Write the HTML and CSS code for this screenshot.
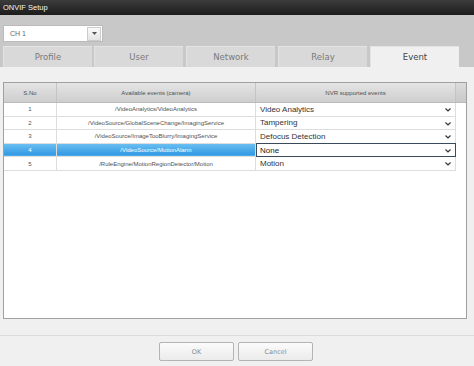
FILE: index.html
```html
<!DOCTYPE html>
<html lang="en">
<head>
<meta charset="UTF-8" />
<title>ONVIF Setup</title>
<link rel="stylesheet" href="styles.css">
</head>
<body>

  <div class="titlebar">ONVIF Setup</div>

  <div class="top">
    <div class="channel">
      <span>CH 1</span>
      <span class="channel-btn">
        <svg width="5" height="3" viewBox="0 0 5 3"><path d="M0 0 L5 0 L2.5 3 Z" fill="#555"/></svg>
      </span>
    </div>
    <div class="tabs">
      <div class="tab">Profile</div>
      <div class="tab">User</div>
      <div class="tab">Network</div>
      <div class="tab">Relay</div>
      <div class="tab active">Event</div>
    </div>
  </div>

  <div class="content">
    <div class="grid-wrap">
      <table class="grid">
        <tr>
          <th class="c-no">S.No</th>
          <th class="c-cam">Available events (camera)</th>
          <th class="c-nvr">NVR supported events</th>
          <th class="c-pad"></th>
        </tr>
        <tr>
          <td>1</td>
          <td>/VideoAnalytics/VideoAnalytics</td>
          <td class="sel"><span>Video Analytics</span><svg class="chev" width="6" height="4" viewBox="0 0 6 4"><path d="M0.5 0.5 L3 3 L5.5 0.5" fill="none" stroke="#333" stroke-width="1.2"/></svg></td>
          <td class="pad"></td>
        </tr>
        <tr>
          <td>2</td>
          <td>/VideoSource/GlobalSceneChange/ImagingService</td>
          <td class="sel"><span>Tampering</span><svg class="chev" width="6" height="4" viewBox="0 0 6 4"><path d="M0.5 0.5 L3 3 L5.5 0.5" fill="none" stroke="#333" stroke-width="1.2"/></svg></td>
          <td class="pad"></td>
        </tr>
        <tr>
          <td>3</td>
          <td>/VideoSource/ImageTooBlurry/ImagingService</td>
          <td class="sel"><span>Defocus Detection</span><svg class="chev" width="6" height="4" viewBox="0 0 6 4"><path d="M0.5 0.5 L3 3 L5.5 0.5" fill="none" stroke="#333" stroke-width="1.2"/></svg></td>
          <td class="pad"></td>
        </tr>
        <tr class="picked">
          <td>4</td>
          <td>/VideoSource/MotionAlarm</td>
          <td class="sel focus"><span>None</span><svg class="chev" width="6" height="4" viewBox="0 0 6 4"><path d="M0.5 0.5 L3 3 L5.5 0.5" fill="none" stroke="#333" stroke-width="1.2"/></svg></td>
          <td class="pad"></td>
        </tr>
        <tr>
          <td>5</td>
          <td>/RuleEngine/MotionRegionDetector/Motion</td>
          <td class="sel"><span>Motion</span><svg class="chev" width="6" height="4" viewBox="0 0 6 4"><path d="M0.5 0.5 L3 3 L5.5 0.5" fill="none" stroke="#333" stroke-width="1.2"/></svg></td>
          <td class="pad"></td>
        </tr>
      </table>
    </div>

    <div class="footer">
      <button class="btn">OK</button>
      <button class="btn">Cancel</button>
    </div>
  </div>

</body>
</html>
```

FILE: styles.css
```css
body {
  margin: 0;
  width: 474px;
  height: 366px;
  overflow: hidden;
  background: #f0f0f0;
  font-family: 'Liberation Sans', Arial, sans-serif;
  color: #444;
}
.titlebar {
  height: 15px;
  line-height: 15px;
  padding-left: 3px;
  font-size: 7.5px;
  color: #f4f4f4;
  background: linear-gradient(#3c3c3c, #1c1c1c);
}
.top {
  background: #c8c8c8;
  padding: 10px 0 0 3px;
}
.channel {
  width: 98px;
  height: 15px;
  background: #fff;
  border: 1px solid #bbb;
  display: flex;
  align-items: center;
  justify-content: space-between;
  font-size: 7px;
  color: #666;
}
.channel span:first-child {
  padding-left: 6px;
}
.channel-btn {
  width: 12px;
  height: 12px;
  margin-right: 1px;
  border: 1px solid #ccc;
  background: linear-gradient(#fafafa, #e4e4e4);
  display: flex;
  align-items: center;
  justify-content: center;
}
.tabs {
  display: flex;
  gap: 2px;
  margin-top: 4px;
}
.tab {
  width: 89px;
  height: 21px;
  line-height: 21px;
  text-align: center;
  font-family: 'DejaVu Sans', Tahoma, sans-serif;
  font-size: 8.5px;
  color: #7a7a7a;
  background: #d9d9d9;
  border-top: 1px solid #e4e4e4;
  border-left: 1px solid #e2e2e2;
  box-sizing: border-box;
}
.tab:nth-child(3) { margin-left: 1px; }
.tab:nth-child(4) { margin-left: 1px; }
.tab:nth-child(5) { margin-left: 1px; }
.tab.active {
  background: #f0f0f0;
  color: #444;
}
.content {
  padding: 15px 0 0 3px;
}
.grid-wrap {
  width: 462px;
  height: 235px;
  border: 1px solid #a0a0a0;
  background: #fff;
}
.grid {
  border-collapse: collapse;
  font-size: 6px;
  color: #505050;
}
.grid th {
  height: 19px;
  padding: 0;
  font-weight: normal;
  color: #505050;
  background: linear-gradient(#e4e4e4, #cecece);
  border-right: 1px solid #c4c4c4;
  border-bottom: 1px solid #bbb;
}
.grid .c-no { width: 52px; }
.grid .c-cam { width: 198px; }
.grid .c-nvr { width: 199px; }
.grid .c-pad { width: 10px; border-right: none; background: linear-gradient(#dcdcdc, #c8c8c8); }
.grid td {
  height: 12.6px;
  padding: 0;
  text-align: center;
  border-right: 1px solid #ddd;
  border-bottom: 1px solid #ddd;
}
.grid td.pad {
  border: none;
}
.grid td.sel {
  text-align: left;
  font-size: 8px;
  color: #333;
  padding: 0 5px 0 4px;
  position: relative;
}
.chev {
  position: absolute;
  right: 4px;
  top: 5px;
}
.grid tr.picked td {
  background: linear-gradient(#6cc0f2, #2f97e2);
  color: #fff;
}
.grid tr.picked td.sel {
  background: #fff;
  color: #222;
  outline: 1px solid #3a4a5a;
  outline-offset: -1px;
}
.grid tr.picked td.pad {
  background: #fff;
}
.footer {
  margin: 16px 0 0 -3px;
  border-top: 1px solid #dcdcdc;
  padding-top: 6px;
  display: flex;
  justify-content: center;
  gap: 4px;
  padding-right: 2px;
}
.btn {
  width: 75px;
  height: 19px;
  font-family: 'DejaVu Sans', Tahoma, sans-serif;
  font-size: 6.5px;
  color: #8a8a8a;
  background: linear-gradient(#fbfbfb, #ebebeb);
  border: 1px solid #b4b4b4;
  border-radius: 2px;
  padding: 0;
}
```
